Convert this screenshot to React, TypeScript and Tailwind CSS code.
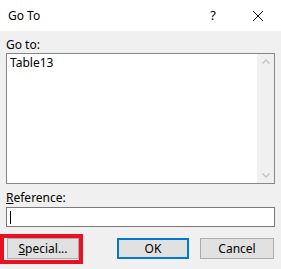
export default function App() {
  return (
    <div
      className="flex h-[269px] w-[281px] flex-col overflow-hidden bg-[#f0f0f0] text-[12px] text-black"
      style={{ fontFamily: '"Noto Sans", "Open Sans", sans-serif' }}
    >
      <div className="flex h-[31px] items-center bg-white pl-[8px]">
        <span className="text-[12px]">Go To</span>
        <span className="ml-auto mr-[36px] text-[13px]">?</span>
        <svg width="12" height="12" viewBox="0 0 12 12" className="mr-[17px]">
          <path d="M1 1L11 11M11 1L1 11" stroke="#111" strokeWidth="1" fill="none" />
        </svg>
      </div>
      <div className="flex flex-col px-[6px]">
        <div className="mt-[5px] h-[17px] leading-[17px]">Go to:</div>
        <div className="flex h-[131px] border border-[#828790] bg-white">
          <div className="flex-1 pl-[3px] pt-[1px] leading-[16px]">Table13</div>
          <div className="flex w-[17px] flex-col items-center justify-between bg-[#f0f0f0] py-[5px]">
            <svg width="8" height="5" viewBox="0 0 8 5">
              <path d="M0.5 4.5L4 1L7.5 4.5" stroke="#c2c2c2" strokeWidth="1.3" fill="none" />
            </svg>
            <svg width="8" height="5" viewBox="0 0 8 5">
              <path d="M0.5 0.5L4 4L7.5 0.5" stroke="#c2c2c2" strokeWidth="1.3" fill="none" />
            </svg>
          </div>
        </div>
        <div className="mt-[5px] h-[18px] leading-[18px]">
          <span className="underline">R</span>eference:
        </div>
        <div className="flex h-[20px] items-center border border-[#7a7a7a] bg-white pl-[3px]">
          <div className="h-[13px] w-px bg-black" />
        </div>
        <div className="mt-[7px] flex items-start">
          <div className="-ml-[6px] border-4 border-[#e81123] pb-[1px] pl-[3px]">
            <button className="flex h-[21px] w-[72px] items-center justify-center border border-[#adadad] bg-[#e1e1e1]">
              <span className="underline">S</span>pecial...
            </button>
          </div>
          <button className="ml-[34px] mt-[4px] flex h-[21px] w-[72px] items-center justify-center border-2 border-[#0078d7] bg-[#e1e1e1]">
            OK
          </button>
          <button className="ml-[11px] mt-[4px] flex h-[21px] w-[74px] items-center justify-center border border-[#adadad] bg-[#e1e1e1]">
            Cancel
          </button>
        </div>
      </div>
    </div>
  );
}
